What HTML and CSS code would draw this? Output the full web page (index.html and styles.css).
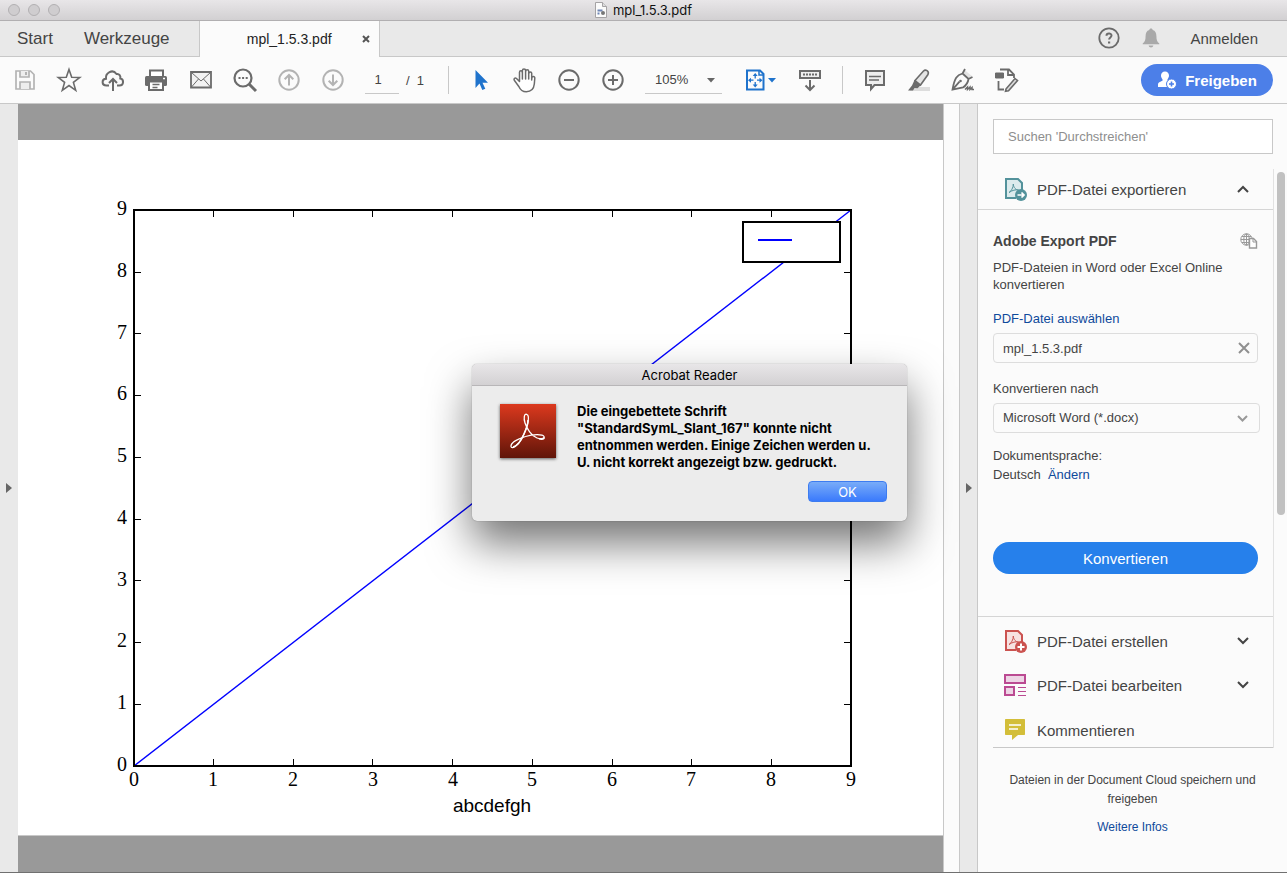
FILE: index.html
```html
<!DOCTYPE html>
<html lang="de">
<head>
    <meta charset="UTF-8">
    <meta name="viewport" content="width=device-width, initial-scale=1.0">
    <title>mpl_1.5.3.pdf</title>
    <link rel="stylesheet" href="styles.css">
</head>
<body>
    <header class="titlebar">
        <div class="lights"><span></span><span></span><span></span></div>
        <div class="window-title">
            <svg width="12" height="16" viewBox="0 0 12 16"><path d="M.5.5h7l4 4v11H.5z" fill="#fbfbfb" stroke="#a5a3a5"/><path d="M7.5.5v4h4" fill="#ddd" stroke="#a5a3a5"/><path d="M2.5 8.5h5M2.5 11.5h2" stroke="#6f86b5" stroke-width="2"/><circle cx="8" cy="11" r="2" fill="#777"/></svg>
            <span>mpl_1.5.3.pdf</span>
        </div>
    </header>

    <nav class="tabs">
        <button class="menu">Start</button>
        <button class="menu">Werkzeuge</button>
        <div class="tab">
            <span class="tab-name">mpl_1.5.3.pdf</span>
            <button class="tab-close" aria-label="Tab schließen"><svg width="8" height="8" viewBox="0 0 8 8"><path d="M1 1l6 6M7 1L1 7" stroke="#555" stroke-width="2"/></svg></button>
        </div>
        <div class="account">
            <button aria-label="Hilfe"><svg width="24" height="24" viewBox="0 0 24 24" fill="none" stroke="#6b6b6b"><circle cx="12" cy="11" r="9.700" stroke-width="1.800"/><path d="M9.500 8.800c0-3 5-3 5-.2 0 1.900-2.400 1.900-2.400 4" stroke-width="2"/><path d="M11 14.500h2.200v2H11z" fill="#6b6b6b" stroke="none"/></svg></button>
            <button aria-label="Mitteilungen"><svg width="24" height="24" viewBox="0 0 24 24" fill="#a9a9a9"><path d="M12 1.500c1 0 1.700.6 1.700 1.500 2.700.8 3.700 3 3.700 6 0 4 .8 6 2.900 7.500v.8H3.700v-.8C5.800 15 6.600 13 6.600 9c0-3 1-5.200 3.700-6 0-.9.700-1.500 1.700-1.500zM9.600 18.500h4.800c-.3 1.300-1.200 2-2.400 2s-2.100-.7-2.400-2z"/></svg></button>
            <button class="login">Anmelden</button>
        </div>
    </nav>

    <div class="toolbar">
        <button class="tool" aria-label="Speichern"><svg width="24" height="24" viewBox="0 0 24 24" fill="none" stroke="#b3b3b3" stroke-width="1.700"><path d="M3 3h14.500L21 6.500V21H3z"/><path d="M7 3v6h9V3M7 21v-7h10v7" fill="#eee"/><path d="M13 4v3" stroke-width="2"/></svg></button>
        <button class="tool" aria-label="Favorit"><svg width="26" height="26" viewBox="0 0 26 26" fill="none" stroke="#6b6b6b" stroke-width="1.600"><path d="M13 2.500l2.700 7.700 8.200.2-6.500 5 2.300 7.900-6.700-4.700-6.700 4.700 2.300-7.900-6.500-5 8.200-.2z"/></svg></button>
        <button class="tool" aria-label="Hochladen"><svg width="24" height="24" viewBox="0 0 24 24" fill="none" stroke="#6b6b6b" stroke-width="2"><path d="M8 17.500H5.500C.3 17.500.5 10.800 5 10.700 4.300 5 11.500.5 15.500 6c2.800-.5 4.400 1.800 3.800 4.500 3.800.6 3.800 7-.8 7H16"/><path d="M12 23V11.500M8 15l4-4 4 4"/></svg></button>
        <button class="tool" aria-label="Drucken"><svg width="24" height="24" viewBox="0 0 24 24"><path d="M5 8V2.500h13V8" fill="#fff" stroke="#6b6b6b" stroke-width="2"/><rect x="0" y="8" width="22" height="10" rx="1.500" fill="#6b6b6b"/><path d="M4 13.500h14V22H4z" fill="#fff" stroke="#6b6b6b" stroke-width="2"/><path d="M7.500 16.500h7M7.500 19.500h5" stroke="#6b6b6b" stroke-width="1.400"/><path d="M18 10.500h2" stroke="#fff" stroke-width="1.500"/></svg></button>
        <button class="tool" aria-label="E-Mail"><svg width="24" height="24" viewBox="0 0 24 24" fill="none" stroke="#6b6b6b"><path d="M2 4h20v15.500H2z" fill="#f2f2f2" stroke-width="1.800"/><path d="M2.500 4.500l9.500 8.500 9.500-8.500M2.500 19l7-8M21.500 19l-7-8" stroke-width="1"/></svg></button>
        <button class="tool" aria-label="Suchen"><svg width="26" height="26" viewBox="0 0 26 26" fill="none" stroke="#6b6b6b"><circle cx="11" cy="11" r="8.500" stroke-width="2.200"/><path d="M17 17l7 7" stroke-width="3"/><path d="M6.500 11h9.500" stroke-width="2" stroke-dasharray="2 1.600"/></svg></button>
        <button class="tool" aria-label="Vorherige Seite"><svg width="24" height="24" viewBox="0 0 24 24" fill="none" stroke="#b3b3b3" stroke-width="2"><circle cx="12" cy="12" r="9.700"/><path d="M12 17.500V7M7.700 11.300L12 7l4.300 4.300"/></svg></button>
        <button class="tool" aria-label="Nächste Seite"><svg width="24" height="24" viewBox="0 0 24 24" fill="none" stroke="#b3b3b3" stroke-width="2"><circle cx="12" cy="12" r="9.700"/><path d="M12 6.500V17M7.700 12.700L12 17l4.300-4.300"/></svg></button>
        <input class="page-number" type="text" value="1" aria-label="Seite">
        <span class="page-count">/&nbsp; 1</span>
        <span class="divider"></span>
        <button class="tool" aria-label="Auswahl"><svg width="24" height="24" viewBox="0 0 24 24"><path d="M6.500 2v18l4-4.500 2.800 6.500 3-1.300-2.800-6H19z" fill="#1f73cc"/></svg></button>
        <button class="tool" aria-label="Hand"><svg width="26" height="26" viewBox="0 0 26 26" fill="#fff" stroke="#6b6b6b" stroke-width="1.500" stroke-linejoin="round" stroke-linecap="round"><path d="M7.500 14.500V5.300c0-2 2.900-2 2.900 0V3.700c0-2.200 3.200-2.200 3.200 0v.5c0-2 3.100-2 3.100 0v2.100c0-1.900 3-1.900 3 0V11c.3-1.900 3.300-1.900 3.100.3L22.300 17c-.5 5-3.500 7.700-8 7.700-3.800 0-6-1.800-7.300-5L2.300 13.300c-1-1.700.9-3 2.200-1.800z"/><path d="M10.400 5.500V12M13.600 4.500V12M16.700 6v6M19.700 11v2" fill="none"/></svg></button>
        <button class="tool" aria-label="Verkleinern"><svg width="24" height="24" viewBox="0 0 24 24" fill="none" stroke="#6b6b6b" stroke-width="2"><circle cx="12" cy="12" r="9.700"/><path d="M7 12h10"/></svg></button>
        <button class="tool" aria-label="Vergrößern"><svg width="24" height="24" viewBox="0 0 24 24" fill="none" stroke="#6b6b6b" stroke-width="2"><circle cx="12" cy="12" r="9.700"/><path d="M7 12h10M12 7v10"/></svg></button>
        <div class="zoom">
            <select aria-label="Zoom"><option>105%</option></select>
            <svg width="8" height="5" viewBox="0 0 8 5"><path d="M0 0h8L4 4.500z" fill="#666"/></svg>
        </div>
        <button class="tool fit" aria-label="Seite einpassen">
            <svg width="24" height="24" viewBox="0 0 24 24" fill="none" stroke="#1f73cc"><path d="M3 2.500h13l3.500 3.500v15.500H3z" stroke-width="2"/><path d="M15 3v4h4" stroke-width="1.500"/><path d="M11.200 6.500v4M11.200 14v4M5.500 12.200h4M13 12.200h4" stroke-width="1.300"/><path d="M11.200 5l2.500 3h-5zM11.200 19.500l2.500-3h-5zM4 12.200l3-2.500v5zM18.500 12.200l-3-2.500v5z" fill="#1f73cc" stroke="none"/></svg>
            <svg width="8" height="5" viewBox="0 0 8 5"><path d="M0 0h8L4 4.500z" fill="#1f73cc"/></svg>
        </button>
        <button class="tool" aria-label="Lesemodus"><svg width="24" height="24" viewBox="0 0 24 24" fill="none" stroke="#6b6b6b" stroke-width="2"><path d="M2 3h20v7H2z" fill="#eee"/><path d="M5 6.500h14" stroke-dasharray="2 1"/><path d="M12 12v9M7.500 17.500L12 22l4.500-4.500"/></svg></button>
        <span class="divider"></span>
        <button class="tool" aria-label="Notiz"><svg width="24" height="24" viewBox="0 0 24 24" fill="#eee" stroke="#6b6b6b"><path d="M3 3h18v14h-9.500L8 21v-4H3z" stroke-width="2"/><path d="M6 8.500h12M6 12h10" stroke-width="1.300"/></svg></button>
        <button class="tool" aria-label="Hervorheben"><svg width="24" height="24" viewBox="0 0 24 24"><path d="M8 19h15v4H2z" fill="#ddd"/><path d="M8 12.500L16.500 3c2-2 6 0 4.500 3.500L13.500 17z" fill="#e4e4e4" stroke="#6b6b6b" stroke-width="1.600"/><path d="M7.500 12l6.500 5-3.500 3.300-3-.3L6 22.500H1l4-5z" fill="#6b6b6b"/></svg></button>
        <button class="tool" aria-label="Unterschreiben"><svg width="26" height="26" viewBox="0 0 26 26" fill="none" stroke="#6b6b6b" stroke-width="1.800"><path d="M14.500 3l7.500 6-3.500 3.500-6-5z" fill="#e4e4e4" stroke="none"/><path d="M15 2l-2.500 4.500 6 5.500 4-2M12.500 6.500C7 8 4.500 11 2.500 22.700L13 20.500c3.700-2.500 5-5 5.500-8.500M2.500 22.700l7-8"/><circle cx="10.500" cy="14" r="1.300" fill="#6b6b6b" stroke="none"/><path d="M15 22.500l2.500-2.500v2.500l2.500-2.500v2.500l2-2v2h2" stroke-width="1.500"/></svg></button>
        <button class="tool" aria-label="Weitere Werkzeuge"><svg width="26" height="26" viewBox="0 0 26 26" fill="none" stroke="#6b6b6b"><path d="M6 2.500h9l5 5V11M4.500 14v8.500H10M14 2.500V8h6" stroke-width="1.800"/><path d="M1.500 6h8v5h-8z" fill="#6b6b6b"/><path d="M12 22l9-10.500 2.500 2-9 10.200-3 .6z" fill="#ddd" stroke-width="1.600"/></svg></button>
        <button class="share">
            <svg width="20" height="20" viewBox="0 0 20 20"><path d="M8 1.500c2.500 0 4 1.700 4 4 0 1.700-.8 2.700-1.500 3.700v1.500c1 .5 2 .7 2.700 1.300L10.500 17H1v-2.500c0-2.500 3-3 4.500-3.800V9.200C4.700 8.200 4 7.200 4 5.500c0-2.300 1.500-4 4-4z" fill="#fff"/><circle cx="14.500" cy="14" r="5" fill="#fff" stroke="#4c7fe8" stroke-width="1"/><path d="M12 14h5M14.500 11.500v5" stroke="#4c7fe8" stroke-width="1.600"/></svg>
            Freigeben
        </button>
    </div>

    <main class="workspace">
        <button class="rail rail-left" aria-label="Navigationsfenster"><svg width="6" height="10" viewBox="0 0 6 10"><path d="M0 0l6 5-6 5z" fill="#666"/></svg></button>
        <section class="document">
            <div class="page">
                <svg class="plot" viewBox="0 0 925 695">
                    <path class="line" d="M116 626L833 70"/>
                    <path class="frame" d="M116 70h717v556H116z"/>
                    <path class="ticks" d="M195.500 626v-7M275.500 626v-7M354.500 626v-7M434.500 626v-7M514.500 626v-7M594.500 626v-7M673.500 626v-7M753.500 626v-7"/>
                    <path class="ticks" d="M195.500 70v7M275.500 70v7M354.500 70v7M434.500 70v7M514.500 70v7M594.500 70v7M673.500 70v7M753.500 70v7"/>
                    <path class="ticks" d="M116 564.500h7M116 502.500h7M116 440.500h7M116 379.500h7M116 317.500h7M116 255.500h7M116 193.500h7M116 132.500h7"/>
                    <path class="ticks" d="M833 564.500h-7M833 502.500h-7M833 440.500h-7M833 379.500h-7M833 317.500h-7M833 255.500h-7M833 193.500h-7M833 132.500h-7"/>
                    <path class="frame legend" d="M725 82h97v40h-97z"/>
                    <path class="key" d="M740 100h34"/>
                    <g class="x-labels">
                        <text x="116" y="646">0</text>
                        <text x="195" y="646">1</text>
                        <text x="275" y="646">2</text>
                        <text x="355" y="646">3</text>
                        <text x="435" y="646">4</text>
                        <text x="514" y="646">5</text>
                        <text x="594" y="646">6</text>
                        <text x="673" y="646">7</text>
                        <text x="753" y="646">8</text>
                        <text x="833" y="646">9</text>
                    </g>
                    <g class="y-labels">
                        <text x="109" y="631">0</text>
                        <text x="109" y="569">1</text>
                        <text x="109" y="507">2</text>
                        <text x="109" y="446">3</text>
                        <text x="109" y="384">4</text>
                        <text x="109" y="322">5</text>
                        <text x="109" y="260">6</text>
                        <text x="109" y="199">7</text>
                        <text x="109" y="137">8</text>
                        <text x="109" y="75">9</text>
                    </g>
                    <text class="x-title" x="474" y="672">abcdefgh</text>
                </svg>
            </div>
        </section>
        <div class="doc-scroll"></div>
        <button class="rail rail-right" aria-label="Werkzeugfenster"><svg width="6" height="10" viewBox="0 0 6 10"><path d="M0 0l6 5-6 5z" fill="#666"/></svg></button>

        <aside class="sidebar">
            <input class="search" type="text" placeholder="Suchen 'Durchstreichen'" aria-label="Suchen">
            <div class="scroller">
                <div class="tools">
                    <button class="tool-row open">
                        <svg width="24" height="24" viewBox="0 0 24 24" fill="none" stroke="#53929b"><path d="M12 21H2V2h12l4 4v7" fill="#dcebed" stroke-width="2"/><path d="M5 15.500c2-1 4.500-5 4.300-8.500.2 3.500 2.500 6 5.200 6-3-.6-6 .2-9.500 2.500z" stroke-width="1"/><circle cx="17" cy="18" r="6" fill="#53929b" stroke="none"/><path d="M13.500 18h6M17.500 15.500L20 18l-2.500 2.500" stroke="#fff" stroke-width="1.700"/></svg>
                        <span>PDF-Datei exportieren</span>
                        <svg class="chevron" width="12" height="8" viewBox="0 0 12 8"><path d="M1 7l5-5 5 5"/></svg>
                    </button>
                    <div class="panel">
                        <div class="panel-head">
                            <h2>Adobe Export PDF</h2>
                            <svg width="18" height="16" viewBox="0 0 18 16" fill="none" stroke="#999"><circle cx="6.500" cy="6.500" r="5.700"/><ellipse cx="6.500" cy="6.500" rx="2.700" ry="5.700"/><path d="M.8 6.500h11M2 3.500h9M2 9.500h9M6.500 1v11"/><path d="M9.500 5.500h4l3 3v6.500h-7z" fill="#fff" stroke-width="1.400"/><path d="M13 5.500V9h3.500"/></svg>
                        </div>
                        <p>PDF-Dateien in Word oder Excel Online konvertieren</p>
                        <a class="choose" href="#">PDF-Datei auswählen</a>
                        <div class="file">
                            <span>mpl_1.5.3.pdf</span>
                            <button aria-label="Datei entfernen"><svg width="12" height="12" viewBox="0 0 12 12"><path d="M1 1l10 10M11 1L1 11" stroke="#909090" stroke-width="2"/></svg></button>
                        </div>
                        <label for="format">Konvertieren nach</label>
                        <div class="format">
                            <select id="format"><option>Microsoft Word (*.docx)</option></select>
                            <svg width="11" height="7" viewBox="0 0 11 7"><path d="M1 1l4.500 4.500L10 1" fill="none" stroke="#999" stroke-width="2"/></svg>
                        </div>
                        <div class="language">Dokumentsprache:<br>Deutsch&nbsp; <a href="#">Ändern</a></div>
                        <button class="convert">Konvertieren</button>
                    </div>
                    <button class="tool-row first">
                        <svg width="24" height="24" viewBox="0 0 24 24" fill="none" stroke="#cb5350"><path d="M12 21H2V2h12l4 4v7" fill="#f7e2e1" stroke-width="2"/><path d="M5 15.500c2-1 4.500-5 4.300-8.500.2 3.500 2.500 6 5.200 6-3-.6-6 .2-9.500 2.500z" stroke-width="1"/><circle cx="17" cy="18" r="6" fill="#cb5350" stroke="none"/><path d="M13.500 18h7M17 14.500v7" stroke="#fff" stroke-width="2"/></svg>
                        <span>PDF-Datei erstellen</span>
                        <svg class="chevron" width="12" height="8" viewBox="0 0 12 8"><path d="M1 1l5 5 5-5"/></svg>
                    </button>
                    <button class="tool-row">
                        <svg width="24" height="24" viewBox="0 0 24 24" fill="#edd5e5" stroke="#bb4a92" stroke-width="2"><path d="M1 2h20v8H1zM1 14h9v8H1z"/><path d="M14 14.500h8M14 18.500h8M14 22.500h8" stroke-width="1"/></svg>
                        <span>PDF-Datei bearbeiten</span>
                        <svg class="chevron" width="12" height="8" viewBox="0 0 12 8"><path d="M1 1l5 5 5-5"/></svg>
                    </button>
                    <button class="tool-row last">
                        <svg width="24" height="24" viewBox="0 0 24 24"><path d="M2 1h18c.7 0 1 .3 1 1v14c0 .7-.3 1-1 1h-6l-6 5v-5H2c-.7 0-1-.3-1-1V2c0-.7.3-1 1-1z" fill="#d3be39"/><path d="M5 7h12M5 11h9" stroke="#fff" stroke-width="1.600"/></svg>
                        <span>Kommentieren</span>
                    </button>
                </div>
                <div class="scrollbar"><div class="thumb"></div></div>
            </div>
            <footer>
                <p>Dateien in der Document Cloud speichern und freigeben</p>
                <a href="#">Weitere Infos</a>
            </footer>
        </aside>
    </main>

    <div class="dialog" role="dialog" aria-label="Acrobat Reader">
        <div class="dialog-title">Acrobat Reader</div>
        <div class="dialog-body">
            <div class="logo"><svg width="38" height="38" viewBox="0 0 38 38" fill="none" stroke="#fff"><path d="M18 2.500c-3-1.500-3.500 4-2 8.500 1.800 5.500 6.500 13 12 15 4 1.500 8 .5 7-1.500-1.200-2.500-11-2.500-18.500 0C10 26.500 1.500 30.500 2 34.500c.5 3 6.500 0 10.500-7.500C16 20.500 18.500 14 19.200 9c.5-3.500.3-5.800-1.200-6.500z" stroke-width="1.300"/><path d="M4 35c4-1 8-6 11-13 2-4.500 4-10 4-14M30 26.700c3 .8 5.500.5 5-1.200" stroke-width="1.600"/></svg></div>
            <p>Die eingebettete Schrift<br>"StandardSymL_Slant_167" konnte nicht<br>entnommen werden. Einige Zeichen werden u.<br>U. nicht korrekt angezeigt bzw. gedruckt.</p>
        </div>
        <button class="ok">OK</button>
    </div>
</body>
</html>
```
FILE: styles.css
```css
:root {
    --bar: #e9e9e9;
    --panel: #fbfbfb;
    --border: #c8c8c8;
    --text: #444;
    --link: #0f4a9c;
}
* {
    box-sizing: border-box;
}
body {
    margin: 0;
    height: 100vh;
    display: flex;
    flex-direction: column;
    overflow: hidden;
    border-bottom: 1px solid #707070;
    background: var(--panel);
    color: var(--text);
    font-family: "Liberation Sans", Arial, sans-serif;
    font-size: 13px;
}
button, input, select {
    font: inherit;
    color: inherit;
    margin: 0;
    padding: 0;
    border: none;
    background: none;
}
select {
    appearance: none;
}
svg {
    display: block;
    flex: none;
}
a {
    color: var(--link);
    text-decoration: none;
}
p, h2 {
    margin: 0;
}

/* window title */
.titlebar {
    display: grid;
    grid-template-columns: 1fr auto 1fr;
    align-items: center;
    height: 21px;
    flex: none;
    background: linear-gradient(#e8e6e8, #d2d0d2);
    border-bottom: 1px solid #b1afb1;
}
.lights {
    display: flex;
    gap: 8px;
    padding-left: 8px;
}
.lights span {
    width: 12px;
    height: 12px;
    border: 1px solid #b2b0b2;
    border-radius: 50%;
    background: #cfcdcf;
}
.window-title {
    display: flex;
    align-items: center;
    gap: 6px;
    font-family: Inter, sans-serif;
    font-size: 13px;
    line-height: 20px;
    color: #111;
}

/* tabs */
.tabs {
    display: flex;
    height: 36px;
    flex: none;
    background: var(--bar);
    box-shadow: inset 0 -1px var(--border);
}
.menu {
    font-size: 17px;
    line-height: 34px;
    padding-left: 17px;
}
.menu + .menu {
    padding: 0 29px 0 31px;
}
.tab {
    display: flex;
    align-items: center;
    justify-content: flex-end;
    width: 181px;
    padding-right: 9px;
    background: var(--panel);
    border: solid var(--border);
    border-width: 0 1px;
}
.tab-name {
    padding-right: 30px;
    font-size: 14px;
    line-height: 38px;
    color: #222;
}
.account {
    display: flex;
    align-items: center;
    gap: 18px;
    margin-left: auto;
    padding-right: 29px;
}
.login {
    padding-left: 9px;
    font-size: 15px;
    line-height: 36px;
}

/* toolbar */
.toolbar {
    display: flex;
    align-items: center;
    height: 47px;
    flex: none;
    padding: 0 14px 0 3px;
    border-bottom: 1px solid var(--border);
}
.tool {
    display: flex;
    align-items: center;
    justify-content: center;
    width: 44px;
    height: 44px;
    flex: none;
}
.page-number {
    width: 34px;
    height: 28px;
    margin-left: 10px;
    padding-right: 8px;
    border-bottom: 1px solid var(--border);
    text-align: center;
}
.page-count {
    width: 32px;
    margin-left: 7px;
}
.divider {
    width: 1px;
    height: 28px;
    margin: 0 10px;
    background: var(--border);
}
.zoom {
    position: relative;
    width: 77px;
    margin: 0 16px 0 10px;
    border-bottom: 1px solid var(--border);
}
.zoom select {
    width: 100%;
    height: 27px;
    padding-left: 10px;
}
.zoom svg {
    position: absolute;
    right: 7px;
    top: 12px;
    pointer-events: none;
}
.fit {
    margin-right: 6px;
}
.share {
    display: flex;
    align-items: center;
    justify-content: center;
    gap: 8px;
    width: 132px;
    height: 32px;
    margin-left: auto;
    border-radius: 16px;
    background: #4c7fe8;
    color: #fff;
    font-size: 15px;
    font-weight: bold;
}

/* document */
.workspace {
    display: flex;
    flex: 1;
    min-height: 0;
}
.rail {
    display: flex;
    align-items: center;
    justify-content: center;
    width: 18px;
    flex: none;
    background: var(--bar);
}
.rail-right {
    width: 19px;
    border: solid var(--border);
    border-width: 0 1px;
}
.document {
    display: flex;
    flex: 1;
    min-width: 0;
    padding: 36px 0;
    background: #999;
}
.page {
    flex: 1;
    min-width: 0;
    background: #fff;
    border-bottom: 1px solid var(--border);
}
.plot {
    width: 100%;
    height: 100%;
}
.line, .frame, .ticks, .key {
    fill: none;
    stroke: #000;
}
.line {
    stroke: #00f;
    stroke-width: 1.4px;
}
.frame, .key {
    stroke-width: 2px;
}
.legend {
    fill: #fff;
}
.key {
    stroke: #00f;
}
.x-labels, .y-labels {
    font-family: "Liberation Serif", "Times New Roman", serif;
    font-size: 20px;
    fill: #000;
}
.x-labels, .x-title {
    text-anchor: middle;
}
.y-labels {
    text-anchor: end;
}
.x-title {
    font-size: 19px;
    fill: #000;
}
.doc-scroll {
    width: 16px;
    border-left: 1px solid var(--border);
}

/* sidebar */
.sidebar {
    display: flex;
    flex-direction: column;
    width: 309px;
    flex: none;
    padding-top: 15px;
}
.search {
    height: 35px;
    flex: none;
    margin: 0 14px 0 15px;
    padding: 0 14px;
    background: #fff;
    border: 1px solid var(--border);
}
.search::placeholder {
    color: #8e8e8e;
}
.scroller {
    display: flex;
    margin-top: 15px;
}
.tools {
    flex: 1;
    border-right: 1px solid #e2e2e2;
}
.tool-row {
    display: flex;
    align-items: center;
    gap: 9px;
    width: 100%;
    height: 44px;
    padding: 0 24px 0 26px;
    font-size: 15px;
}
.chevron {
    margin-left: auto;
    fill: none;
    stroke: #444;
    stroke-width: 2px;
}
.open {
    height: 41px;
    border-bottom: 1px solid #d5d5d5;
}
.first {
    margin-top: 2px;
}
.last {
    width: auto;
    min-width: calc(100% - 15px);
    height: 41px;
    margin-left: 15px;
    padding: 6px 0 0 11px;
    border-bottom: 1px solid var(--border);
}
.panel {
    display: flex;
    flex-direction: column;
    padding: 21px 15px 42px;
    border-bottom: 1px solid #d5d5d5;
    line-height: 17px;
}
.panel-head {
    display: flex;
    align-items: center;
    justify-content: space-between;
    margin-bottom: 8px;
}
.panel-head h2 {
    font-size: 14px;
    line-height: 20px;
}
.choose {
    margin: 17px 0 6px;
}
.file {
    display: flex;
    align-items: center;
    justify-content: space-between;
    height: 30px;
    margin-bottom: 17px;
    padding: 0 7px 0 9px;
    border: 1px solid #ddd;
    border-radius: 4px;
}
.format {
    position: relative;
    margin: 6px -2px 13px 0;
}
.format select {
    width: 100%;
    height: 30px;
    padding: 0 0 2px 9px;
    border: 1px solid #ddd;
    border-radius: 4px;
}
.format svg {
    position: absolute;
    right: 12px;
    top: 12px;
    pointer-events: none;
}
.language {
    line-height: 19px;
}
.convert {
    height: 32px;
    margin-top: 58px;
    border-radius: 16px;
    background: #2680eb;
    color: #fff;
    font-size: 15px;
}
.scrollbar {
    width: 13px;
    padding: 3px 2px 0 3px;
}
.thumb {
    height: 343px;
    border-radius: 4px;
    background: #c1c1c1;
}
.sidebar footer {
    padding: 23px 20px 0;
    text-align: center;
    font-size: 12px;
    line-height: 19px;
}
.sidebar footer p {
    margin-bottom: 9px;
}

/* alert */
.dialog {
    position: absolute;
    left: 472px;
    top: 364px;
    width: 435px;
    padding-bottom: 19px;
    border-radius: 5px;
    background: #ececec;
    box-shadow: 0 0 1px rgba(0, 0, 0, 0.5), 0 22px 44px rgba(0, 0, 0, 0.55);
    color: #000;
    font-family: Inter, sans-serif;
    font-size: 13px;
}
.dialog-title {
    height: 22px;
    border-bottom: 1px solid #b8b6b8;
    border-radius: 5px 5px 0 0;
    background: linear-gradient(#e8e6e8, #d3d1d3);
    line-height: 22px;
    text-align: center;
}
.dialog-body {
    display: flex;
    gap: 21px;
    padding: 17px 28px 0;
}
.dialog-body p {
    font-weight: bold;
    line-height: 17px;
    white-space: nowrap;
}
.logo {
    display: flex;
    align-items: center;
    justify-content: center;
    width: 56px;
    height: 54px;
    margin-top: 1px;
    flex: none;
    background: linear-gradient(#dc391e, #601509);
    box-shadow: 0 1px 3px rgba(0, 0, 0, 0.6);
}
.ok {
    display: block;
    width: 79px;
    height: 21px;
    margin: 10px 20px 0 auto;
    border: 1px solid #3d7cf0;
    border-radius: 4px;
    background: linear-gradient(#79acf8, #3a7afc);
    color: #fff;
}
```
